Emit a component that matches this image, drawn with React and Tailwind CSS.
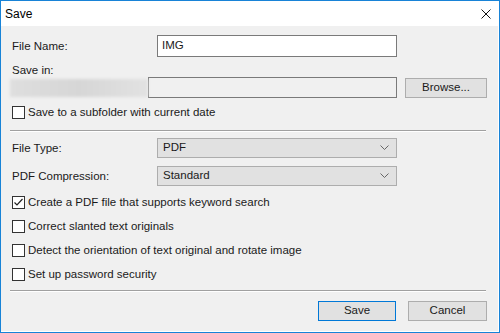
import React from "react";

const font = { fontFamily: '"Liberation Sans", Arial, sans-serif' };

const Check = ({ checked, label }) => (
  <label className="flex items-center h-[13px] gap-[3px] text-[11.5px] leading-[13px] text-[#1a1a1a]">
    <span className="w-[13px] h-[13px] border border-[#333] bg-white flex items-center justify-center shrink-0">
      {checked && (
        <svg width="11" height="11" viewBox="0 0 11 11">
          <path d="M1.5 5.5 L4 8 L9.5 2" fill="none" stroke="#222" strokeWidth="1.2" />
        </svg>
      )}
    </span>
    <span>{label}</span>
  </label>
);

const Select = ({ value }) => (
  <div className="w-[240px] h-[20px] border border-[#adadad] bg-[#e1e1e1] flex items-center justify-between pl-[5px] pr-[7px] text-[11.5px] text-[#1a1a1a]">
    <span>{value}</span>
    <svg width="9" height="6" viewBox="0 0 9 6">
      <path d="M0.5 0.5 L4.5 4.5 L8.5 0.5" fill="none" stroke="#666" strokeWidth="1" />
    </svg>
  </div>
);

const Row = ({ label, children, className = "" }) => (
  <div className={`flex items-center ${className}`}>
    <span className="w-[145px] text-[11.5px] leading-[14px] text-[#1a1a1a]">{label}</span>
    {children}
  </div>
);

export default function App() {
  return (
    <div
      className="w-[500px] h-[333px] bg-white border border-[#1883d7] flex flex-col"
      style={font}
    >
      {/* title bar */}
      <div className="h-[25px] shrink-0 flex items-center justify-between pl-[4px] pr-[8px] bg-white">
        <span className="text-[12px] text-black">Save</span>
        <svg width="10" height="10" viewBox="0 0 10 10">
          <path d="M0.5 0.5 L9.5 9.5 M9.5 0.5 L0.5 9.5" stroke="#111" strokeWidth="1" />
        </svg>
      </div>

      <div className="flex-1 bg-[#f0f0f0] flex flex-col px-[9px] pt-[9px] mr-[1px] mb-[1px]">
        <Row label="File Name:" className="pl-[2px] h-[22px]">
          <div className="w-[240px] h-[22px] border border-[#7a7a7a] bg-white flex items-center px-[4px] text-[11.5px] text-[#1a1a1a]">
            IMG
          </div>
        </Row>

        <div className="mt-[6px] h-[14px] pl-[2px] text-[11.5px] leading-[14px] text-[#1a1a1a]">Save in:</div>
        <div className="flex items-center h-[21px]">
          <div className="w-[138px] h-[18px] bg-gradient-to-r from-[#dedede] via-[#d6d6d6] to-[#e2e2e2] blur-[1.5px]" />
          <div className="w-[249px] h-[21px] border border-[#7a7a7a] bg-[#f0f0f0]" />
          <div className="ml-[8px] w-[82px] h-[20px] border border-[#adadad] bg-[#e1e1e1] flex items-center justify-center text-[11.5px] text-[#1a1a1a]">
            Browse...
          </div>
        </div>

        <div className="mt-[8px] pl-[2px]">
          <Check label="Save to a subfolder with current date" />
        </div>

        <div className="mt-[11px] h-[2px] bg-[#a0a0a0] border-b border-white w-[476px]" />

        <Row label="File Type:" className="mt-[6px] pl-[2px] h-[20px]">
          <Select value="PDF" />
        </Row>
        <Row label="PDF Compression:" className="mt-[8px] pl-[2px] h-[20px]">
          <Select value="Standard" />
        </Row>

        <div className="flex flex-col gap-[11px] mt-[10px] pl-[2px]">
          <Check checked label="Create a PDF file that supports keyword search" />
          <Check label="Correct slanted text originals" />
          <Check label="Detect the orientation of text original and rotate image" />
          <Check label="Set up password security" />
        </div>

        <div className="mt-[9px] h-[2px] bg-[#a0a0a0] border-b border-white w-[476px]" />

        <div className="flex justify-end gap-[12px] mt-[9px] pr-[2px]">
          <div className="w-[78px] h-[20px] border border-[#0078d7] bg-[#e1e1e1] flex items-center justify-center text-[11.5px] text-[#1a1a1a]">
            Save
          </div>
          <div className="w-[79px] h-[20px] border border-[#adadad] bg-[#e1e1e1] flex items-center justify-center text-[11.5px] text-[#1a1a1a]">
            Cancel
          </div>
        </div>
      </div>
    </div>
  );
}
